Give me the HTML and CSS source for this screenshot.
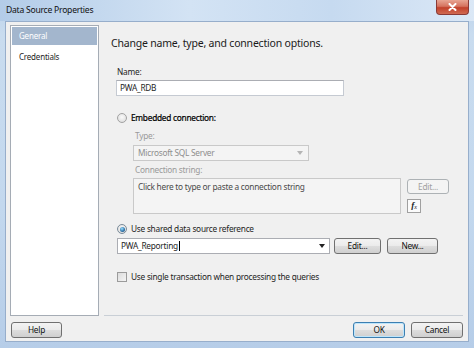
FILE: index.html
```html
<!DOCTYPE html>
<html>
<head>
<meta charset="utf-8">
<link rel="stylesheet" href="styles.css">
</head>
<body>
<div class="frame">
  <div class="titlebar">
    <span class="title">Data Source Properties</span>
    <div class="close"><svg width="9" height="8" viewBox="0 0 9 8"><path d="M1.5 1 L7.5 7 M7.5 1 L1.5 7" stroke="#fff" stroke-width="2" stroke-linecap="round"/></svg></div>
  </div>
  <div class="client">
    <div class="top">
      <div class="nav">
        <div class="nav-item selected">General</div>
        <div class="nav-item">Credentials</div>
      </div>
      <div class="main">
        <div class="heading">Change name, type, and connection options.</div>
        <div class="section">
          <div class="label name-label">Name:</div>
          <div class="textbox name-box">PWA_RDB</div>
          <div class="option embedded">
            <span class="radio"></span><span class="opt-text strong">Embedded connection:</span>
          </div>
          <div class="indent">
            <div class="label dim type-label">Type:</div>
            <div class="select disabled">Microsoft SQL Server<span class="arrow light"></span></div>
            <div class="label dim conn-label">Connection string:</div>
            <div class="conn-row">
              <div class="textarea">Click here to type or paste a connection string</div>
              <div class="side-btns">
                <div class="btn small disabled-btn">Edit...</div>
                <div class="fx"><i>f</i><sub>x</sub></div>
              </div>
            </div>
          </div>
          <div class="option shared">
            <span class="radio checked"></span><span class="opt-text">Use shared data source reference</span>
          </div>
          <div class="shared-row">
            <div class="combo">PWA_Reporting<span class="caret"></span><span class="arrow"></span></div>
            <div class="btn edit-btn">Edit...</div>
            <div class="btn new-btn">New...</div>
          </div>
          <div class="option single">
            <span class="checkbox"></span><span class="opt-text">Use single transaction when processing the queries</span>
          </div>
        </div>
      </div>
    </div>
    <div class="footer">
      <div class="btn help-btn">Help</div>
      <div class="spacer"></div>
      <div class="btn ok-btn">OK</div>
      <div class="btn cancel-btn">Cancel</div>
    </div>
  </div>
</div>
</body>
</html>
```

FILE: styles.css
```css
* { box-sizing: border-box; }
html, body { margin: 0; padding: 0; }
body {
  width: 474px;
  height: 348px;
  overflow: hidden;
  font-family: "Noto Sans", "Open Sans", sans-serif;
  font-size: 8.3px;
  letter-spacing: -0.25px;
  color: #1e1e1e;
}
.frame {
  width: 474px;
  height: 348px;
  background: linear-gradient(180deg, #bcd2ea 0%, #c9dcef 10%, #c3d8ee 60%, #b6cde8 100%);
  display: flex;
  flex-direction: column;
}
.titlebar {
  height: 21px;
  display: flex;
  align-items: flex-start;
  position: relative;
  background: linear-gradient(90deg, #b3cce8 0%, #d3e3f4 40%, #c6daf0 70%, #dbe8f6 100%);
}
.title {
  margin: 3px 0 0 6px;
  font-size: 8.6px;
  letter-spacing: -0.25px;
  line-height: 14px;
  color: #111;
}
.close {
  position: absolute;
  left: 436px;
  top: 0;
  width: 33px;
  height: 15px;
  border: 1px solid #8a3a36;
  border-top: none;
  border-radius: 0 0 4px 4px;
  background: linear-gradient(180deg, #e8a593 0%, #d5735f 45%, #c2412b 55%, #d06a52 100%);
  display: flex;
  align-items: center;
  justify-content: center;
}
.client {
  margin-left: 5px;
  width: 464px;
  height: 321px;
  background: #f0f0f0;
  border: 1px solid #97aecb;
  padding: 3px 5px 0 4px;
  display: flex;
  flex-direction: column;
}
.top {
  display: flex;
  height: 291px;
}
.nav {
  width: 89px;
  height: 291px;
  background: #fff;
  border: 1px solid #a5acb5;
  padding: 1px;
}
.nav-item {
  height: 18px;
  line-height: 18px;
  padding-left: 7px;
  font-size: 8px;
  letter-spacing: -0.2px;
}
.nav-item.selected {
  background: #a3b6cd;
  color: #fff;
  margin-bottom: 3px;
}
.main {
  margin-left: 5px;
  flex: 1;
  border-bottom: 1px solid #c9cfd6;
  position: relative;
}
.heading {
  margin: 9px 0 0 7px;
  font-size: 10.5px;
  letter-spacing: -0.2px;
  line-height: 18px;
  color: #1a1a1a;
}
.section {
  padding-left: 13px;
}
.label {
  line-height: 14px;
}
.dim { color: #9a9a9a; }
.name-label { margin-top: 13px; }
.textbox {
  margin: 1px 0 0 -1px;
  width: 228px;
  height: 16px;
  background: #fff;
  border: 1px solid #c5cad2;
  border-top-color: #abadb3;
  padding-left: 3px;
  line-height: 14px;
}
.option {
  display: flex;
  align-items: center;
  height: 14px;
}
.embedded { margin-top: 15px; }
.shared { margin-top: 8px; }
.single { margin-top: 16px; }
.opt-text {
  margin-left: 4px;
  line-height: 14px;
}
.strong { color: #000; -webkit-text-stroke: 0.2px #000; }
.radio {
  width: 10px;
  height: 10px;
  border-radius: 50%;
  border: 1px solid #a2a2a2;
  background: radial-gradient(circle at 50% 40%, #fafafa 0%, #e2e2e2 70%, #d0d0d0 100%);
  position: relative;
}
.radio.checked {
  border-color: #7a8b99;
}
.radio.checked::after {
  content: "";
  position: absolute;
  left: 1.5px;
  top: 1.5px;
  width: 5px;
  height: 5px;
  border-radius: 50%;
  background: radial-gradient(circle at 40% 35%, #9be0ff 0%, #2d71a8 60%, #1d3d62 100%);
}
.checkbox {
  width: 10px;
  height: 10px;
  border: 1px solid #9b9b9b;
  background: linear-gradient(135deg, #dcdcdc 0%, #f4f4f4 100%);
}
.indent {
  padding-left: 16px;
}
.type-label { margin-top: 4px; padding-left: 2px; }
.conn-label { margin-top: 2px; padding-left: 2px; }
.select {
  margin-top: 2px;
  width: 176px;
  height: 16px;
  border: 1px solid #c9c9c9;
  background: #f4f4f4;
  padding-left: 4px;
  line-height: 14px;
  color: #8e8e8e;
  position: relative;
}
.arrow {
  position: absolute;
  right: 4px;
  top: 5px;
  width: 0;
  height: 0;
  border-left: 3px solid transparent;
  border-right: 3px solid transparent;
  border-top: 4px solid #222;
}
.arrow.light { border-top-color: #b5b5b5; right: 5px; }
.conn-row {
  margin-top: 1px;
  display: flex;
  align-items: flex-start;
}
.textarea {
  width: 268px;
  height: 36px;
  border: 1px solid #c9c9c9;
  background: #f4f4f4;
  padding: 1px 4px;
  line-height: 13px;
  color: #4a4a4a;
}
.side-btns {
  margin-left: 6px;
  padding-top: 1px;
  display: flex;
  flex-direction: column;
}
.btn {
  height: 16px;
  border: 1px solid #707070;
  border-radius: 3px;
  background: linear-gradient(180deg, #f3f3f3 0%, #ebebeb 48%, #dddddd 52%, #cfcfcf 100%);
  display: flex;
  align-items: center;
  justify-content: center;
  line-height: 14px;
  color: #111;
}
.btn.small {
  width: 42px;
  height: 15px;
}
.disabled-btn {
  border-color: #adb2b5;
  background: #f4f4f4;
  color: #a0a0a0;
}
.fx {
  margin-top: 5px;
  width: 14px;
  height: 14px;
  border: 1px solid #a0a0a0;
  background: #fbfbfb;
  font-family: "Liberation Serif", serif;
  font-size: 9px;
  letter-spacing: 0;
  line-height: 11px;
  text-align: center;
  color: #222;
}
.fx i { font-weight: bold; }
.fx sub { font-size: 6px; font-style: italic; vertical-align: -1px; }
.shared-row {
  margin-top: 2px;
  display: flex;
  align-items: flex-start;
}
.combo {
  width: 213px;
  height: 16px;
  background: #fff;
  border: 1px solid #abadb3;
  padding-left: 3px;
  line-height: 14px;
  position: relative;
  display: flex;
  align-items: center;
}
.caret {
  width: 1px;
  height: 10px;
  background: #000;
  margin-left: 1px;
}
.edit-btn { width: 47px; margin-left: 4px; }
.new-btn { width: 51px; margin-left: 6px; }
.footer {
  margin-top: 6px;
  display: flex;
  align-items: flex-start;
}
.help-btn { width: 51px; margin-left: 1px; }
.spacer { flex: 1; }
.ok-btn {
  width: 52px;
  border-color: #3c7fb1;
  box-shadow: inset 0 0 0 1px #bde5fb;
}
.cancel-btn { width: 52px; margin-left: 6px; }
```
